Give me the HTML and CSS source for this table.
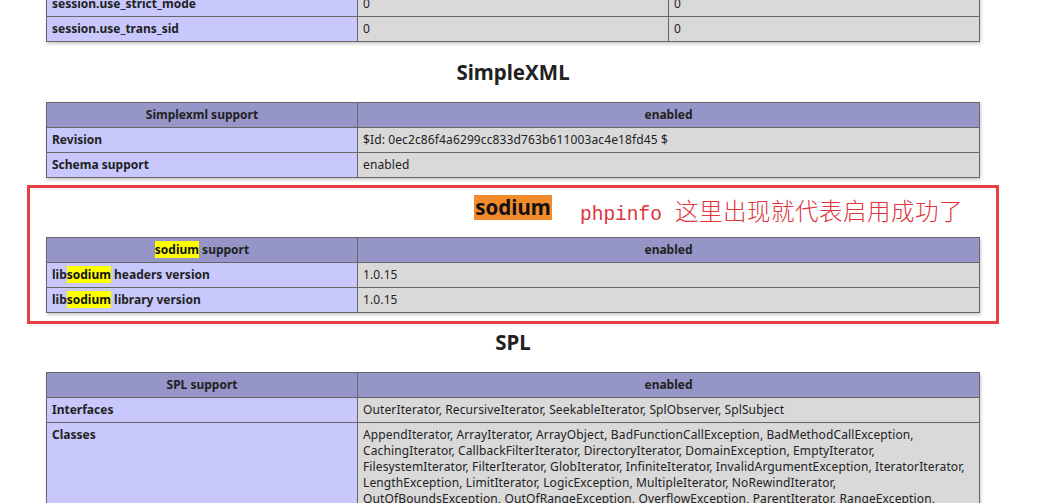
FILE: index.html
```html
<!DOCTYPE html>
<html lang="zh-CN">
<head>
<meta charset="utf-8">
<title>phpinfo()</title>
<link rel="stylesheet" href="styles.css">
</head>
<body>
<div class="page">
  <table class="first">
    <tr><td class="e">session.use_strict_mode</td><td class="v">0</td><td class="v">0</td></tr>
    <tr><td class="e">session.use_trans_sid</td><td class="v">0</td><td class="v">0</td></tr>
  </table>

  <h2>SimpleXML</h2>
  <table>
    <tr class="h"><th>Simplexml support</th><th>enabled</th></tr>
    <tr><td class="e">Revision</td><td class="v">$Id: 0ec2c86f4a6299cc833d763b611003ac4e18fd45 $</td></tr>
    <tr><td class="e">Schema support</td><td class="v">enabled</td></tr>
  </table>

  <h2><mark class="current">sodium</mark></h2>
  <table>
    <tr class="h"><th><mark>sodium</mark> support</th><th>enabled</th></tr>
    <tr><td class="e">lib<mark>sodium</mark> headers version</td><td class="v">1.0.15</td></tr>
    <tr><td class="e">lib<mark>sodium</mark> library version</td><td class="v">1.0.15</td></tr>
  </table>

  <h2>SPL</h2>
  <table>
    <tr class="h"><th>SPL support</th><th>enabled</th></tr>
    <tr><td class="e">Interfaces</td><td class="v">OuterIterator, RecursiveIterator, SeekableIterator, SplObserver, SplSubject</td></tr>
    <tr><td class="e">Classes</td><td class="v">AppendIterator, ArrayIterator, ArrayObject, BadFunctionCallException, BadMethodCallException, CachingIterator, CallbackFilterIterator, DirectoryIterator, DomainException, EmptyIterator, FilesystemIterator, FilterIterator, GlobIterator, InfiniteIterator, InvalidArgumentException, IteratorIterator, LengthException, LimitIterator, LogicException, MultipleIterator, NoRewindIterator, OutOfBoundsException, OutOfRangeException, OverflowException, ParentIterator, RangeException, RecursiveArrayIterator, RecursiveCachingIterator, RecursiveCallbackFilterIterator, RecursiveDirectoryIterator, RecursiveFilterIterator, RecursiveIteratorIterator, RecursiveRegexIterator, RecursiveTreeIterator, RegexIterator, RuntimeException, SplDoublyLinkedList, SplFileInfo, SplFileObject, SplFixedArray, SplHeap, SplMinHeap, SplMaxHeap, SplObjectStorage, SplPriorityQueue, SplQueue, SplStack, SplTempFileObject, UnderflowException, UnexpectedValueException</td></tr>
  </table>

  <div class="annotation">
    <span class="note"><span class="latin">phpinfo</span> <span class="cjk">这里出现就代表启用成功了</span></span>
  </div>
</div>
</body>
</html>
```

FILE: styles.css
```css
html, body {
  margin: 0;
  padding: 0;
  background: #fff;
}

body {
  font-family: "Noto Sans", "Open Sans", sans-serif;
  color: #222;
}

.page {
  display: flow-root;
  position: relative;
  width: 1026px;
}

table {
  border-collapse: collapse;
  border: 0;
  width: 934px;
  margin: 16px auto 15px;
  box-shadow: 1px 2px 3px #ccc;
}

table.first {
  margin-top: -9px;
  margin-bottom: 16px;
}

td, th {
  border: 1px solid #666;
  font-size: 12px;
  line-height: 16px;
  vertical-align: baseline;
  padding: 4px 5px;
  text-align: left;
}

th {
  text-align: center;
}

.h {
  background-color: #9595c8;
  font-weight: bold;
}

.e {
  background-color: #c8c8fc;
  width: 300px;
  font-weight: bold;
}

.v {
  background-color: #d9d9d9;
  letter-spacing: 0.12px;
}

h2 {
  margin: 0;
  height: 28px;
  font-size: 20.5px;
  line-height: 28px;
  font-weight: bold;
  text-align: center;
}

mark {
  background: #ffff00;
  color: #111;
}

mark.current {
  display: inline-block;
  background: #f28b2b;
  line-height: 25px;
  padding: 0 1px;
  margin-top: 2px;
  vertical-align: top;
}

.annotation {
  position: absolute;
  left: 27px;
  top: 185px;
  width: 972px;
  height: 139px;
  box-sizing: border-box;
  border: 3px solid #e5403f;
}

.note {
  position: absolute;
  left: 550px;
  top: 9px;
  white-space: nowrap;
  line-height: 26px;
  color: #e0343c;
}

.latin {
  font-family: "Liberation Mono", monospace;
  font-size: 19.5px;
}

.cjk {
  font-family: "Noto Sans CJK SC", sans-serif;
  font-size: 23.5px;
  font-weight: 300;
  letter-spacing: 0.5px;
  margin-left: 9px;
}
```
